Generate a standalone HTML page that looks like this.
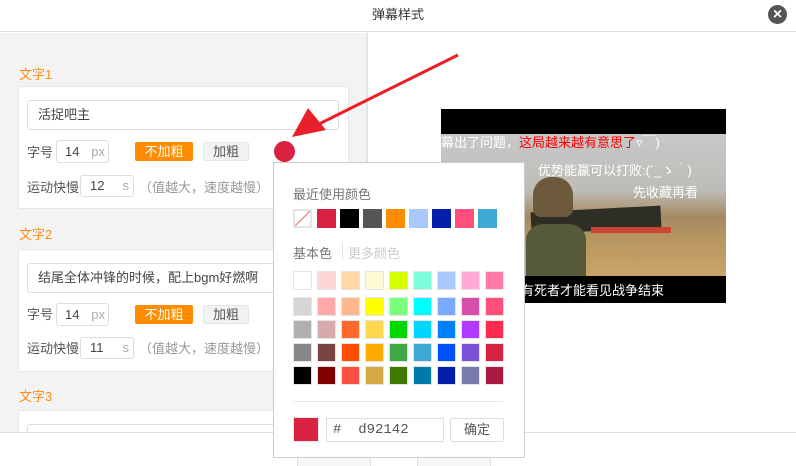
<!DOCTYPE html>
<html><head><meta charset="utf-8"><style>
*{margin:0;padding:0;box-sizing:border-box}
html,body{width:796px;height:466px;overflow:hidden}
body{position:relative;background:#fff;font-family:"Liberation Sans","Noto Sans CJK SC",sans-serif;font-size:13px;color:#555}
.a{position:absolute}
.hdr{left:0;top:0;width:796px;height:32px;border-bottom:1px solid #ddd;text-align:center;line-height:30px;font-size:13px;color:#333}
.left{left:0;top:33px;width:368px;height:399px;background:#f3f3f3;border-right:2px solid #e4e4e4;overflow:hidden}
.lbl{color:#ff8c1a;font-size:13px}
.card{background:#fff;border:1px solid #e6e6e6;border-radius:3px}
.inp{background:#fff;border:1px solid #ddd;border-radius:3px}
.btnO{background:#ff8c00;color:#fff;border-radius:2px;text-align:center;line-height:19px;font-size:13px}
.btnG{background:#f2f2f2;border:1px solid #e6e6e6;color:#555;border-radius:2px;text-align:center;line-height:17px;font-size:13px}
.sw{position:absolute;width:19px;height:19px;border:1px solid #e4e4e4}
</style></head><body>
<div class="a hdr">弹幕样式</div>
<div class="a" style="left:768px;top:5px;width:19px;height:19px;border-radius:50%;background:#555;color:#fff;font-size:16px;font-weight:bold;text-align:center;line-height:19px">×</div>
<div class="a left">
  <div class="a lbl" style="left:19px;top:31px">文字1</div>
  <div class="a card" style="left:18px;top:53px;width:331px;height:123px"></div>
  <div class="a inp" style="left:27px;top:67px;width:312px;height:30px;padding-left:10px;line-height:28px;color:#444">活捉吧主</div>
  <div class="a" style="left:27px;top:109px">字号</div>
  <div class="a inp" style="left:56px;top:107px;width:53px;height:23px;padding-left:8px;line-height:21px;color:#444">14<span style="position:absolute;right:3px;color:#aaa">px</span></div>
  <div class="a btnO" style="left:135px;top:109px;width:58px;height:19px">不加粗</div>
  <div class="a btnG" style="left:203px;top:109px;width:46px;height:19px">加粗</div>
  <div class="a" style="left:274px;top:108px;width:21px;height:21px;border-radius:50%;background:#d92142"></div>
  <div class="a" style="left:27px;top:144px">运动快慢</div>
  <div class="a inp" style="left:80px;top:142px;width:54px;height:22px;padding-left:9px;line-height:20px;color:#444">12<span style="position:absolute;right:4px;color:#aaa">s</span></div>
  <div class="a" style="left:139px;top:144px;color:#999">（值越大，速度越慢）</div>

  <div class="a lbl" style="left:19px;top:191px">文字2</div>
  <div class="a card" style="left:18px;top:216px;width:331px;height:123px"></div>
  <div class="a inp" style="left:27px;top:230px;width:312px;height:30px;padding-left:10px;line-height:28px;color:#444">结尾全体冲锋的时候，配上bgm好燃啊</div>
  <div class="a" style="left:27px;top:271px">字号</div>
  <div class="a inp" style="left:56px;top:270px;width:53px;height:23px;padding-left:8px;line-height:21px;color:#444">14<span style="position:absolute;right:3px;color:#aaa">px</span></div>
  <div class="a btnO" style="left:135px;top:272px;width:58px;height:19px">不加粗</div>
  <div class="a btnG" style="left:203px;top:272px;width:46px;height:19px">加粗</div>
  <div class="a" style="left:27px;top:305px">运动快慢</div>
  <div class="a inp" style="left:80px;top:304px;width:54px;height:22px;padding-left:9px;line-height:20px;color:#444">11<span style="position:absolute;right:4px;color:#aaa">s</span></div>
  <div class="a" style="left:139px;top:305px;color:#999">（值越大，速度越慢）</div>

  <div class="a lbl" style="left:19px;top:353px">文字3</div>
  <div class="a card" style="left:18px;top:377px;width:331px;height:60px"></div>
  <div class="a inp" style="left:27px;top:391px;width:312px;height:30px"></div>
</div>
<div class="a" style="left:0;top:432px;width:796px;height:34px;background:#fff;border-top:1px solid #ddd"></div>
<div class="a" style="left:297px;top:455px;width:74px;height:11px;border:1px solid #e0e0e0;border-bottom:0;border-radius:3px 3px 0 0;background:#f7f7f7"></div>
<div class="a" style="left:417px;top:455px;width:74px;height:11px;border:1px solid #e0e0e0;border-bottom:0;border-radius:3px 3px 0 0;background:#f7f7f7"></div>

<!-- video -->
<div class="a" style="left:441px;top:109px;width:285px;height:194px;background:#000;overflow:hidden">
  <div class="a" style="left:0;top:25px;width:285px;height:142px;background:linear-gradient(180deg,#c8c8ca 0%,#bebcb6 40%,#a48a62 58%,#b89660 75%,#c9a56a 100%)"></div>
  <div class="a" style="left:90px;top:100px;width:130px;height:22px;background:#2e2e26;transform:rotate(-3deg)"></div>
  <div class="a" style="left:92px;top:68px;width:40px;height:40px;border-radius:45% 45% 20% 20%;background:#6d5a3c"></div>
  <div class="a" style="left:85px;top:115px;width:60px;height:52px;border-radius:30% 30% 0 0;background:#565a3a"></div>
  <div class="a" style="left:150px;top:118px;width:80px;height:6px;background:#c43"></div>
  <div class="a" style="left:0;top:23px;width:285px;color:#fff;font-size:13px;white-space:nowrap">幕出了问题，<span style="color:#f00">这局越来越有意思了</span>▿￣)</div>
  <div class="a" style="left:97px;top:51px;color:#fff;font-size:13px;white-space:nowrap">优势能赢可以打败:(´_ゝ｀)</div>
  <div class="a" style="left:192px;top:73px;color:#fff;font-size:13px;white-space:nowrap">先收藏再看</div>
  <div class="a" style="left:80px;top:171px;color:#fff;font-size:13px;white-space:nowrap">有死者才能看见战争结束</div>
</div>

<!-- arrow -->
<svg class="a" style="left:280px;top:50px" width="190" height="95" viewBox="0 0 190 95">
  <line x1="178" y1="5" x2="35" y2="76" stroke="#e8202a" stroke-width="3"/>
  <polygon points="12,87 28,58 46,80" fill="#e8202a"/>
</svg>

<!-- popup -->
<div class="a" style="left:273px;top:162px;width:252px;height:296px;background:#fff;border:1px solid #ccc">
  <div class="a" style="left:19px;top:21px;color:#777;font-size:13px">最近使用颜色</div>
  <div class="sw" style="left:19px;top:46px;background:linear-gradient(135deg,#fff 46%,#f08080 48%,#f08080 52%,#fff 54%);border:2px solid #e4e4e4"></div>
  <div class="sw" style="left:43px;top:46px;background:#d92142;border:0"></div>
  <div class="sw" style="left:66px;top:46px;background:#000;border:0"></div>
  <div class="sw" style="left:89px;top:46px;background:#555;border:0"></div>
  <div class="sw" style="left:112px;top:46px;background:#ff8c00;border:0"></div>
  <div class="sw" style="left:135px;top:46px;background:#a8c8fa;border:0"></div>
  <div class="sw" style="left:158px;top:46px;background:#0520a8;border:0"></div>
  <div class="sw" style="left:181px;top:46px;background:#ff4f7a;border:0"></div>
  <div class="sw" style="left:204px;top:46px;background:#3fa9d6;border:0"></div>
  <div class="a" style="left:19px;top:80px;color:#777;font-size:13px">基本色</div>
  <div class="a" style="left:68px;top:80px;width:1px;height:17px;background:#e4e4e4"></div>
  <div class="a" style="left:74px;top:80px;color:#ccc;font-size:13px">更多颜色</div>
  <div id="grid"></div>
  <div class="a" style="left:19px;top:238px;width:210px;height:1px;background:#e8e8e8"></div>
  <div class="a" style="left:19px;top:254px;width:26px;height:25px;background:#d92142;border:1px solid #e4e4e4"></div>
  <div class="a" style="left:52px;top:255px;width:118px;height:24px;border:1px solid #ddd;font-family:'Liberation Mono',monospace;font-size:14px;color:#555;line-height:22px;padding-left:6px">#&nbsp;&nbsp;d92142</div>
  <div class="a" style="left:176px;top:255px;width:54px;height:24px;border:1px solid #ddd;border-radius:2px;text-align:center;line-height:22px;font-size:13px;color:#555">确定</div>
</div>
<script>
var c=[["#fff","#ffd6d6","#ffd8a8","#fffad6","#d6ff00","#7affda","#a8c8ff","#ffaad6","#ff7aa8"],
["#d6d6d6","#ffaaaa","#ffb88e","#ffff00","#7aff7a","#00ffff","#7aaaff","#d64fa8","#ff4f7a"],
["#b0b0b0","#d6aaaa","#ff6a2a","#ffd84f","#00d600","#00d6ff","#0080ff","#b03aff","#ff2a4f"],
["#888","#7a4444","#ff4f00","#ffaa00","#3fa844","#3fa9d6","#0050ff","#7a50d6","#d92142"],
["#000","#800000","#ff4f44","#d6a844","#407800","#007aaa","#0520a8","#7a7aaa","#aa1a44"]];
var ys=[108,134,157,180,203],h="";
for(var r=0;r<5;r++)for(var k=0;k<9;k++)h+='<div class="sw" style="left:'+(19+k*24)+'px;top:'+ys[r]+'px;background:'+c[r][k]+'"></div>';
document.getElementById("grid").innerHTML=h;
</script>
</body></html>
